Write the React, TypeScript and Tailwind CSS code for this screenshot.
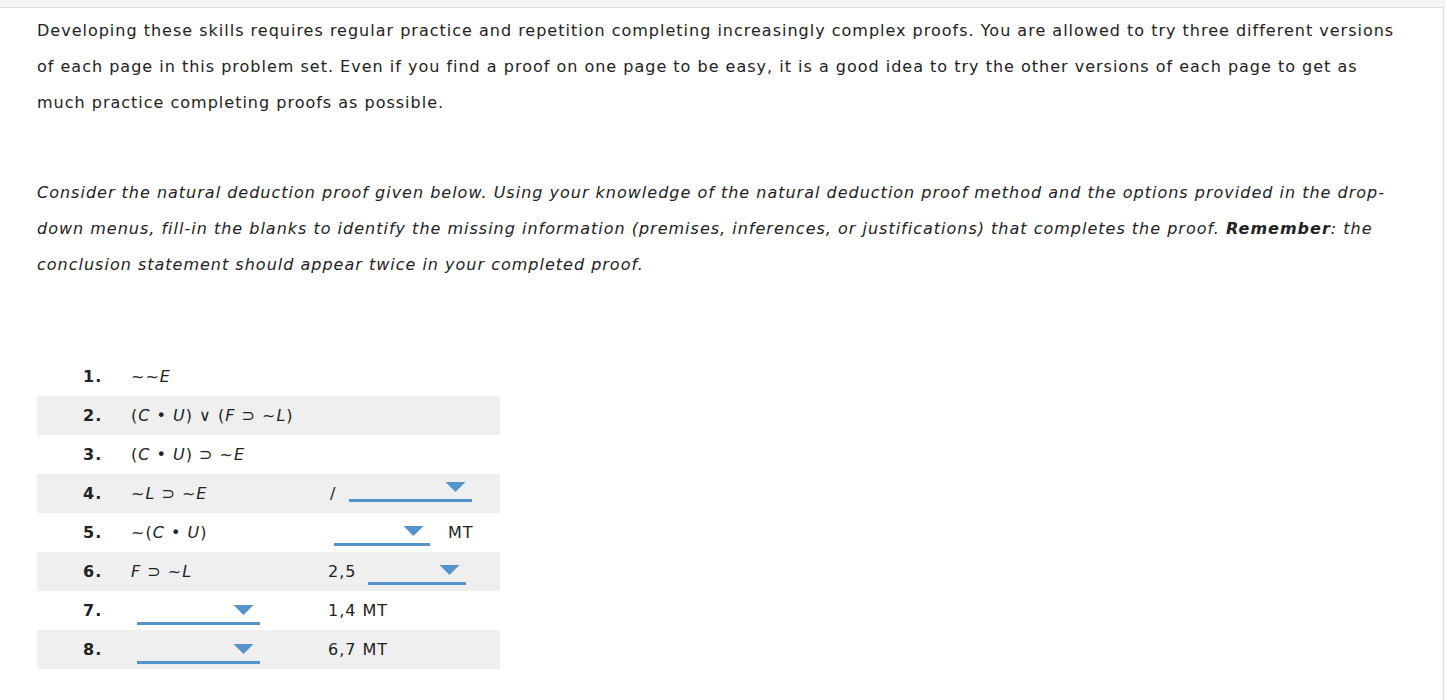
import React from "react";

function Dropdown({ width }: { width: number }) {
  return (
    <span
      className="relative inline-block h-[22px] border-b-[3px] border-[#5594cb] align-middle"
      style={{ width }}
    >
      <svg
        viewBox="0 0 20 10"
        className="absolute right-[6px] top-[2px] h-[10px] w-[21px]"
      >
        <polygon points="0,0 20,0 10,10" fill="#5594cb" />
      </svg>
    </span>
  );
}

// italicize only the sentence letters, keep operators and brackets upright
function F({ s }: { s: string }) {
  return (
    <span className="whitespace-pre">
      {s.split("").map((ch, i) =>
        /[A-Z]/.test(ch) ? <i key={i}>{ch}</i> : <span key={i}>{ch}</span>
      )}
    </span>
  );
}

type Row = {
  n: number;
  formula?: React.ReactNode;
  just?: React.ReactNode;
};

const rows: Row[] = [
  { n: 1, formula: <F s="~~E" /> },
  { n: 2, formula: <F s="(C • U) ∨ (F ⊃ ~L)" /> },
  { n: 3, formula: <F s="(C • U) ⊃ ~E" /> },
  {
    n: 4,
    formula: <F s="~L ⊃ ~E" />,
    just: (
      <span className="flex items-center">
        <span className="ml-[2px] mr-[13px]">/</span>
        <span className="-mt-[6px]"><Dropdown width={123} /></span>
      </span>
    ),
  },
  {
    n: 5,
    formula: <F s="~(C • U)" />,
    just: (
      <span className="flex items-center">
        <span className="ml-[6px] mt-[4px]"><Dropdown width={96} /></span>
        <span className="ml-[18px]">MT</span>
      </span>
    ),
  },
  {
    n: 6,
    formula: <F s="F ⊃ ~L" />,
    just: (
      <span className="flex items-center">
        <span>2,5</span>
        <span className="ml-[12px] mt-[4px]"><Dropdown width={98} /></span>
      </span>
    ),
  },
  {
    n: 7,
    formula: (
      <span className="ml-[6px] mt-[6px] inline-block"><Dropdown width={123} /></span>
    ),
    just: <span>1,4 MT</span>,
  },
  {
    n: 8,
    formula: (
      <span className="ml-[6px] mt-[6px] inline-block"><Dropdown width={123} /></span>
    ),
    just: <span>6,7 MT</span>,
  },
];

export default function App() {
  return (
    <div className="min-h-[700px] bg-[#f5f5f5] pt-[7px] font-['DejaVu_Sans',Verdana,sans-serif] text-[#222] tracking-[1px]">
      <div className="mr-[2px] min-h-[693px] border-r border-t border-[#dedede] bg-white pl-[37px] pr-[36px] pt-[5px]">
        <p className="text-[16px] leading-[36px]">
          Developing these skills requires regular practice and repetition completing increasingly complex proofs. You are allowed to try three different versions of each page in this problem set. Even if you find a proof on one page to be easy, it is a good idea to try the other versions of each page to get as much practice completing proofs as possible.
        </p>

        <p className="mt-[54px] text-[16px] italic leading-[36px]">
          Consider the natural deduction proof given below. Using your knowledge of the natural deduction proof method and the options provided in the drop-down menus, fill-in the blanks to identify the missing information (premises, inferences, or justifications) that completes the proof.{" "}
          <b className="font-bold">Remember</b>
          : the conclusion statement should appear twice in your completed proof.
        </p>

        <div className="mt-[74px] w-[463px] text-[16px]">
          {rows.map((r) => (
            <div
              key={r.n}
              className={`flex h-[39px] items-center ${r.n % 2 === 0 ? "bg-[#efefef]" : ""}`}
            >
              <span className="w-[94px] pl-[46px] font-bold">{r.n}.</span>
              <span className="flex w-[197px] items-center">{r.formula}</span>
              <span className="flex items-center">{r.just}</span>
            </div>
          ))}
        </div>
      </div>
    </div>
  );
}
